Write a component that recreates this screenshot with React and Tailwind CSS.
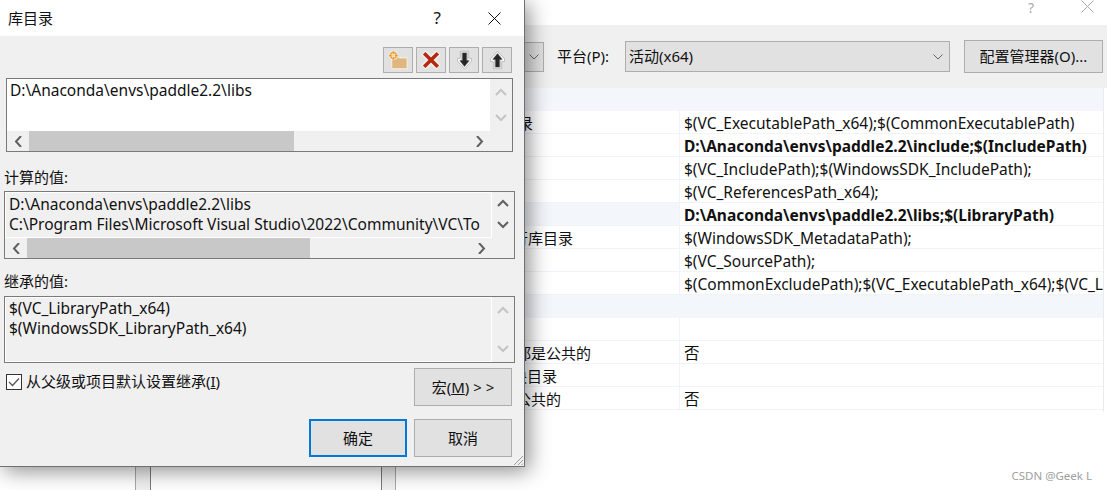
const FONT = "font-['Noto_Sans','Noto_Sans_CJK_SC',sans-serif]";

// labels are the parts left visible beside the dialog, so each one is pulled under its edge
const rows = [
  { kind: 'section' },
  { label: '录', indent: '-ml-[7px]', value: '$(VC_ExecutablePath_x64);$(CommonExecutablePath)' },
  { value: 'D:\\Anaconda\\envs\\paddle2.2\\include;$(IncludePath)', bold: true },
  { value: '$(VC_IncludePath);$(WindowsSDK_IncludePath);' },
  { value: '$(VC_ReferencesPath_x64);' },
  { value: 'D:\\Anaconda\\envs\\paddle2.2\\libs;$(LibraryPath)', bold: true, selected: true },
  { label: '行库目录', indent: '-ml-[12px]', value: '$(WindowsSDK_MetadataPath);' },
  { value: '$(VC_SourcePath);' },
  { value: '$(CommonExcludePath);$(VC_ExecutablePath_x64);$(VC_L' },
  { kind: 'section' },
  { value: '' },
  { label: '都是公共的', indent: '-ml-[9px]', value: '否' },
  { label: '块目录', indent: '-ml-[13px]', value: '' },
  { label: '公共的', indent: '-ml-[9px]', value: '否' },
];

function Chevron({ dir, muted }) {
  const d = {
    up: 'M1 7 L6 2 L11 7',
    down: 'M1 2 L6 7 L11 2',
    left: 'M7 0 L2 5.5 L7 11',
    right: 'M2 0 L7 5.5 L2 11',
  }[dir];
  const horizontal = dir === 'left' || dir === 'right';
  return (
    <svg width={horizontal ? 9 : 12} height={horizontal ? 11 : 9} viewBox={horizontal ? '0 0 9 11' : '0 0 12 9'} fill="none">
      <path d={d} stroke={muted ? '#c4c4c4' : '#606060'} strokeWidth="2" />
    </svg>
  );
}

function FolderIcon() {
  return (
    <svg width="20" height="20" viewBox="0 0 24 24">
      <path d="M4.5 7.5 H12 L13.5 9.5 H23 V22.5 H4.5 Z" fill="#deb67e" stroke="#f8f1e4" strokeWidth="1.2" />
      <circle cx="6.5" cy="6.5" r="5.6" fill="#f6f2ea" />
      <g fill="#e8962e">
        <circle cx="6.5" cy="2.9" r="1.5" />
        <circle cx="6.5" cy="10.1" r="1.5" />
        <circle cx="2.9" cy="6.5" r="1.5" />
        <circle cx="10.1" cy="6.5" r="1.5" />
        <circle cx="4" cy="4" r="1.2" />
        <circle cx="9" cy="4" r="1.2" />
        <circle cx="4" cy="9" r="1.2" />
        <circle cx="9" cy="9" r="1.2" />
      </g>
      <circle cx="6.5" cy="6.5" r="1.6" fill="#f7d58c" />
    </svg>
  );
}

function DeleteIcon() {
  return (
    <svg width="22" height="20" viewBox="0 0 24 22">
      <path d="M4 3 L20 19 M20 3 L4 19" stroke="#f4f4f4" strokeWidth="7" />
      <path d="M4.5 3.5 L19.5 18.5 M19.5 3.5 L4.5 18.5" stroke="#b3280f" strokeWidth="4" />
    </svg>
  );
}

function ArrowIcon({ up }) {
  return (
    <svg width="15" height="20" viewBox="0 0 18 22" className={up ? '' : 'rotate-180'}>
      <path d="M9 .5 L17.5 9.5 V13 H14 V21.5 H4 V13 H.5 V9.5 Z" fill="#f8f8f8" stroke="#b4b4b4" strokeWidth="1" />
      <path d="M9 2.5 L15.5 10.5 H12.5 V20 H5.5 V10.5 H2.5 Z" fill="#8f8f8f" />
      <path d="M9 3.5 L14.5 10.5 H11.2 V19.5 H6.8 V10.5 H3.5 Z" fill="#262626" />
    </svg>
  );
}

function ToolButton({ children }) {
  return (
    <button type="button" className="flex h-[26px] w-[30px] items-center justify-center border border-[#adadad] bg-[#e1e1e1]">
      {children}
    </button>
  );
}

function PathBox({ lines, height, scrollbarH, thumb, mutedV, white }) {
  return (
    <div className="flex flex-col border border-[#7a7a7a]" style={{ height }}>
      <div className="flex min-h-0 flex-1">
        <div className={`min-w-0 flex-1 overflow-hidden whitespace-nowrap border border-white text-[15.5px] leading-[20px] text-[#111] ${white ? 'bg-white pl-[2px]' : 'pl-[3px]'} ${!mutedV ? 'pt-px' : ''}`}>
          {lines.map((line) => <div key={line}>{line}</div>)}
        </div>
        <div className={`flex w-[22px] shrink-0 flex-col items-center ${mutedV ? 'justify-between py-[9px]' : 'gap-[12px] pt-[7px]'}`}>
          <Chevron dir="up" muted={mutedV} />
          <Chevron dir="down" muted={mutedV} />
        </div>
      </div>
      {scrollbarH && (
        <div className="flex h-[20px] shrink-0 items-center">
          <div className="flex w-[22px] justify-center"><Chevron dir="left" /></div>
          <div className="h-full bg-[#c8c8c8]" style={{ width: thumb }} />
          <div className="flex flex-1 justify-end pr-[28px]"><Chevron dir="right" /></div>
        </div>
      )}
    </div>
  );
}

function DialogButton({ children, primary }) {
  return (
    <button
      type="button"
      className={`h-[38px] w-[98px] bg-[#e1e1e1] text-[15px] text-[#111] ${primary ? 'border-2 border-[#0078d7]' : 'border border-[#adadad]'}`}
    >
      {children}
    </button>
  );
}

function LibraryDialog() {
  return (
    <div className="absolute left-0 top-0 flex h-[467px] w-[525px] flex-col border-b border-r border-[#707070] bg-[#f0f0f0] shadow-[4px_4px_20px_rgba(0,0,0,0.45)]">
      <div className="flex h-[36px] shrink-0 items-center bg-white pl-[8px] text-[15px] text-[#111]">
        <span className="flex-1">库目录</span>
        <span className="mr-[47px] text-[17px]">?</span>
        <svg width="13" height="13" viewBox="0 0 13 13" className="mr-[23px]">
          <path d="M.5 .5 L12.5 12.5 M12.5 .5 L.5 12.5" stroke="#111" strokeWidth="1" />
        </svg>
      </div>

      <div className="mr-[12px] mt-[11px] flex justify-end gap-[3px]">
        <ToolButton><FolderIcon /></ToolButton>
        <ToolButton><DeleteIcon /></ToolButton>
        <ToolButton><ArrowIcon /></ToolButton>
        <ToolButton><ArrowIcon up /></ToolButton>
      </div>

      <div className="ml-[6px] mr-[11px] mt-[5px]">
        <PathBox lines={['D:\\Anaconda\\envs\\paddle2.2\\libs']} height={74} scrollbarH thumb={265} mutedV white />
      </div>

      <div className="mt-[15px] pl-[4px] text-[15px] leading-[20px] text-[#111]">计算的值:</div>
      <div className="ml-[4px] mr-[9px] mt-[4px]">
        <PathBox
          lines={['D:\\Anaconda\\envs\\paddle2.2\\libs', 'C:\\Program Files\\Microsoft Visual Studio\\2022\\Community\\VC\\To']}
          height={68}
          scrollbarH
          thumb={283}
        />
      </div>

      <div className="mt-[12px] pl-[4px] text-[15px] leading-[20px] text-[#111]">继承的值:</div>
      <div className="ml-[4px] mr-[9px] mt-[5px]">
        <PathBox lines={['$(VC_LibraryPath_x64)', '$(WindowsSDK_LibraryPath_x64)']} height={67} mutedV />
      </div>

      <div className="flex justify-between pl-[6px] pr-[12px] pt-[5px]">
        <label className="flex h-[20px] items-center gap-[4px] pt-[7px] text-[15px] text-[#111]">
          <span className="flex h-[16px] w-[16px] items-center justify-center border border-[#333] bg-white">
            <svg width="12" height="10" viewBox="0 0 12 10" fill="none"><path d="M1 5 L4.5 8.5 L11 1.5" stroke="#555" strokeWidth="1.3" /></svg>
          </span>
          <span>从父级或项目默认设置继承(<span className="underline">I</span>)</span>
        </label>
        <DialogButton>宏(<span className="underline">M</span>) &gt; &gt;</DialogButton>
      </div>

      <div className="flex justify-end gap-[7px] pr-[12px] pt-[13px]">
        <DialogButton primary>确定</DialogButton>
        <DialogButton>取消</DialogButton>
      </div>

      <svg width="12" height="12" viewBox="0 0 12 12" className="absolute bottom-0 right-0">
        <path d="M11 2 L2 11 M11 6 L6 11 M11 9.5 L9.5 11" stroke="#9a9a9a" strokeWidth="1" />
      </svg>
    </div>
  );
}

function ParentWindow() {
  return (
    <div className="absolute inset-0 flex flex-col bg-white">
      <div className="flex h-[25px] shrink-0 items-start justify-end bg-white">
        <span className="mr-[47px] mt-[1px] text-[14px] leading-[14px] text-[#aaa]">?</span>
        <svg width="13" height="13" viewBox="0 0 13 13" className="mr-[13px]">
          <path d="M.5 .5 L12.5 12.5 M12.5 .5 L.5 12.5" stroke="#aaa" strokeWidth="1" />
        </svg>
      </div>
      <div className="flex h-[63px] shrink-0 items-center bg-[#f0f0f0] pl-[524px] text-[15px] text-[#111]">
        <div className="flex h-[30px] w-[20px] items-center justify-center border border-[#adadad] bg-[#e1e1e1]">
          <svg width="10" height="6" viewBox="0 0 10 6" fill="none"><path d="M.5 .5 L5 5 L9.5 .5" stroke="#666" /></svg>
        </div>
        <span className="ml-[13px] w-[68px]">平台(P):</span>
        <div className="flex h-[31px] w-[325px] items-center justify-between border border-[#adadad] bg-[#e1e1e1] pl-[3px] pr-[6px]">
          <span>活动(x64)</span>
          <svg width="10" height="6" viewBox="0 0 10 6" fill="none"><path d="M.5 .5 L5 5 L9.5 .5" stroke="#666" /></svg>
        </div>
        <button type="button" className="ml-[14px] h-[33px] w-[139px] border border-[#adadad] bg-[#e1e1e1]">配置管理器(O)...</button>
      </div>
      <div className="ml-[396px] mr-[3px] h-[324px] shrink-0 border-r border-[#e8ecf2]">
        {rows.map((row, i) =>
          row.kind === 'section' ? (
            <div key={i} className="h-[23px] bg-[#f3f6fb]" />
          ) : (
            <div key={i} className="flex h-[23px] border-b border-[#f0f3f8] text-[15px] leading-[24px] text-[#111]">
              <div className={`w-[284px] shrink-0 overflow-hidden whitespace-nowrap border-r border-[#f0f3f8] pl-[129px] ${row.selected ? 'bg-[#f3f6fb]' : ''}`}>
                <div className="overflow-hidden">
                  <div className={row.indent}>{row.label}</div>
                </div>
              </div>
              <div className={`min-w-0 flex-1 overflow-hidden whitespace-nowrap pl-[4px] text-[15.5px] ${row.bold ? 'font-bold' : ''}`}>{row.value}</div>
            </div>
          ),
        )}
      </div>
      <div className="flex min-h-0 flex-1">
        <div className="ml-[135px] w-[16px] border-x border-l-[#a8a8a8] border-r-[#7a7a7a] bg-[#f0f0f0]" />
        <div className="w-[231px] border-r border-[#7a7a7a]" />
        <div className="w-[14px] border-r border-[#a8a8a8] bg-[#f0f0f0]" />
      </div>
      <span className="absolute bottom-[6px] right-[15px] text-[11.5px] text-[#a0a0a0]">CSDN @Geek L</span>
    </div>
  );
}

export default function App() {
  return (
    <div className={`relative h-[490px] w-[1107px] overflow-hidden ${FONT}`}>
      <ParentWindow />
      <LibraryDialog />
    </div>
  );
}
